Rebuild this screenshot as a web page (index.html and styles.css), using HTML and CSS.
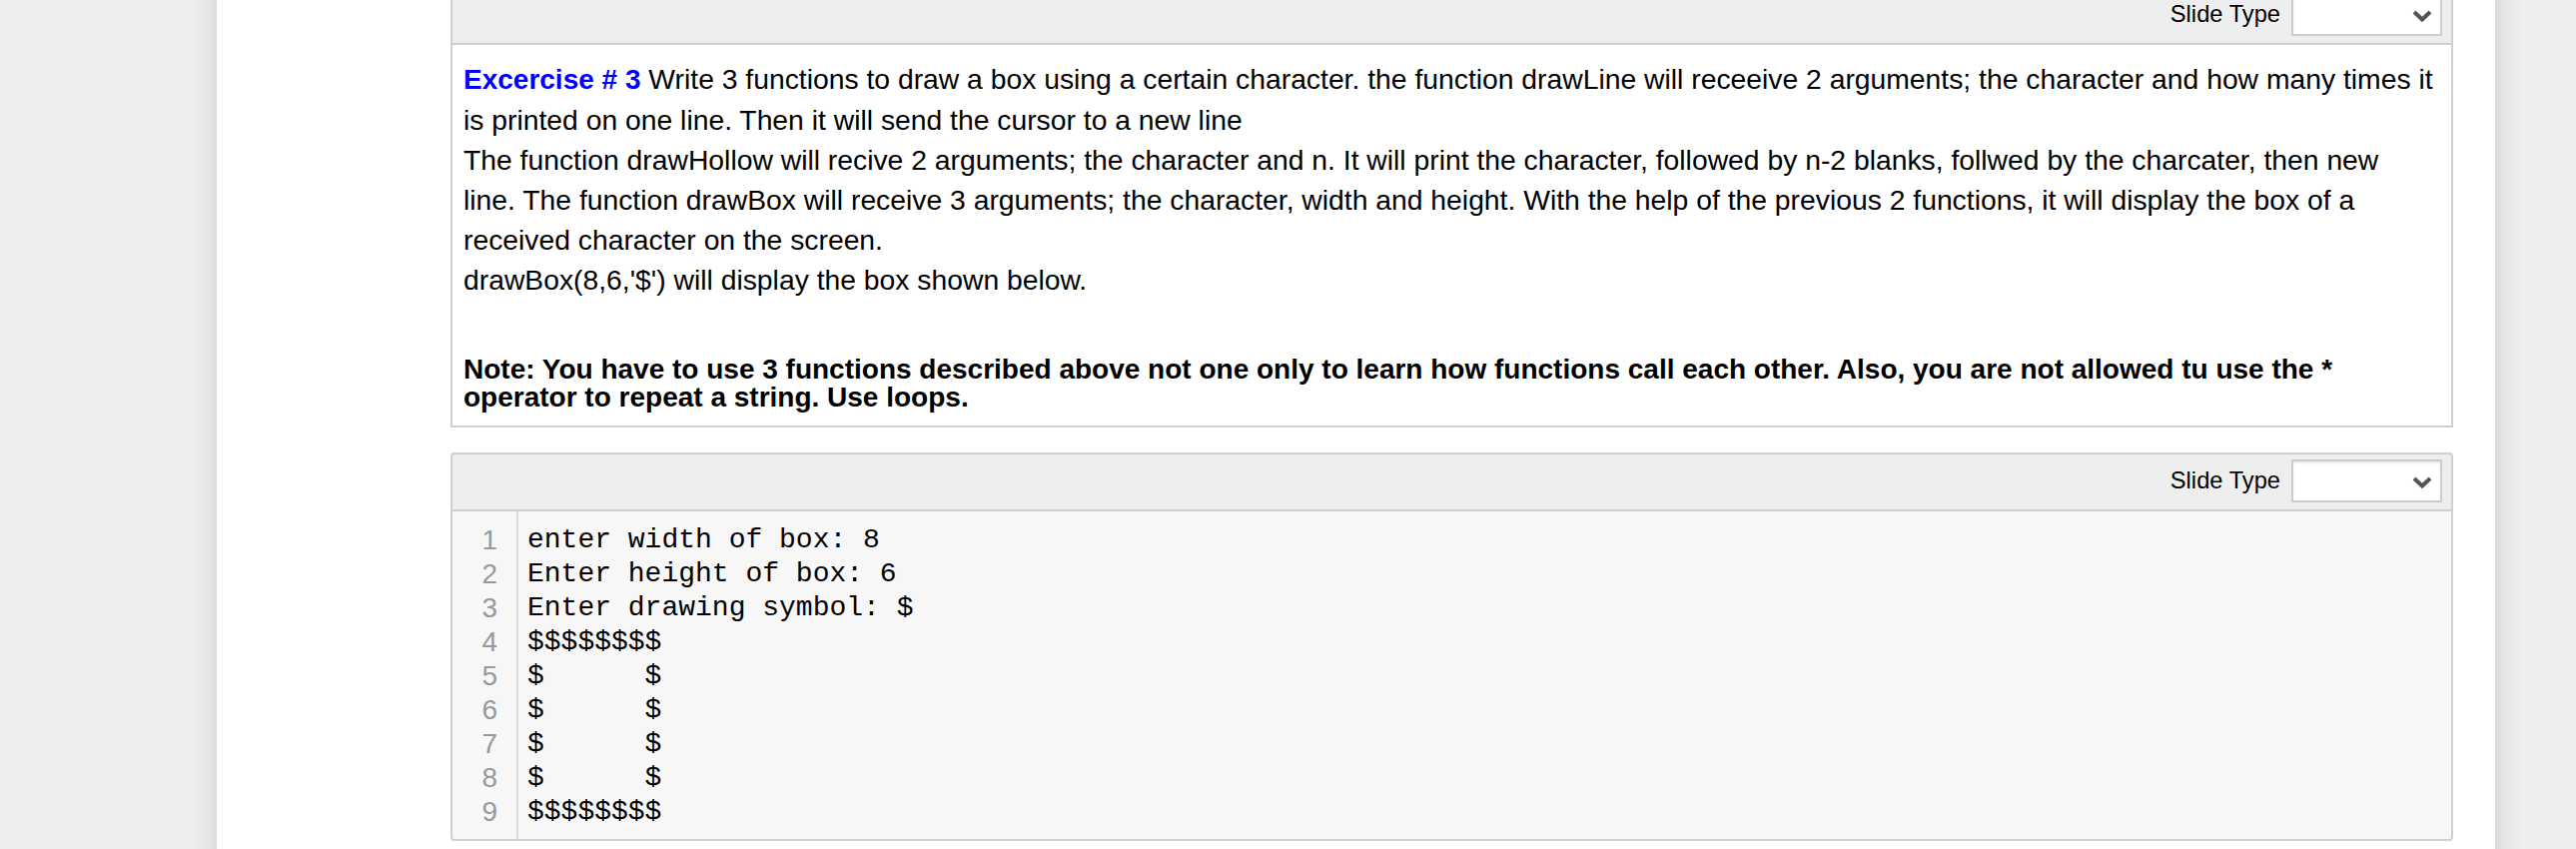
FILE: index.html
```html
<!DOCTYPE html>
<html>
<head>
<meta charset="utf-8">
<title>Notebook</title>
<link rel="stylesheet" href="styles.css">
</head>
<body>
<div class="notebook">
  <div class="cell">
    <div class="prompt"></div>
    <div class="inner">
      <div class="toolbar">
        <span class="tb-label">Slide Type</span>
        <div class="select">
          <svg class="chev" width="20" height="12" viewBox="0 0 20 12"><path d="M2 2 L10 9.5 L18 2" fill="none" stroke="#555" stroke-width="4"/></svg>
        </div>
      </div>
      <div class="text-render">
        <p><span class="ex">Excercise # 3</span> Write 3 functions to draw a box using a certain character. the function drawLine will receeive 2 arguments; the character and how many times it is printed on one line. Then it will send the cursor to a new line<br>The function drawHollow will recive 2 arguments; the character and n. It will print the character, followed by n-2 blanks, follwed by the charcater, then new line. The function drawBox will receive 3 arguments; the character, width and height. With the help of the previous 2 functions, it will display the box of a received character on the screen.<br>drawBox(8,6,'$') will display the box shown below.</p>
        <h4>Note: You have to use 3 functions described above not one only to learn how functions call each other. Also, you are not allowed tu use the * operator to repeat a string. Use loops.</h4>
      </div>
    </div>
  </div>
  <div class="cell cell-code">
    <div class="prompt"></div>
    <div class="inner">
      <div class="toolbar">
        <span class="tb-label">Slide Type</span>
        <div class="select">
          <svg class="chev" width="20" height="12" viewBox="0 0 20 12"><path d="M2 2 L10 9.5 L18 2" fill="none" stroke="#555" stroke-width="4"/></svg>
        </div>
      </div>
      <div class="code-area">
        <div class="gutter">
          <div class="ln">1</div><div class="ln">2</div><div class="ln">3</div><div class="ln">4</div><div class="ln">5</div><div class="ln">6</div><div class="ln">7</div><div class="ln">8</div><div class="ln">9</div>
        </div>
        <div class="lines">
          <div class="cl">enter width of box: 8</div>
          <div class="cl">Enter height of box: 6</div>
          <div class="cl">Enter drawing symbol: $</div>
          <div class="cl">$$$$$$$$</div>
          <div class="cl">$      $</div>
          <div class="cl">$      $</div>
          <div class="cl">$      $</div>
          <div class="cl">$      $</div>
          <div class="cl">$$$$$$$$</div>
        </div>
      </div>
    </div>
  </div>
</div>
</body>
</html>
```

FILE: styles.css
```css
html, body {
  margin: 0;
  padding: 0;
  background: #eeeeee;
  height: 850px;
  overflow: hidden;
}

body {
  font-family: "Liberation Sans", Arial, Helvetica, sans-serif;
  color: #000;
}

.notebook {
  width: 2221px;
  margin-left: 217px;
  margin-top: -26px;
  padding: 0 30px 200px 30px;
  background: #ffffff;
  box-shadow: 0 0 24px 2px rgba(87, 87, 87, 0.2);
}

.cell {
  display: flex;
  padding: 10px;
  border: 2px solid transparent;
}

.cell-code {
  margin-top: 1px;
}

.prompt {
  width: 192px;
  flex: none;
}

.inner {
  flex: 1;
  min-width: 0;
}

.toolbar {
  background: #eeeeee;
  border: 2px solid #cfcfcf;
  border-bottom: none;
  border-radius: 4px 4px 0 0;
  display: flex;
  justify-content: flex-end;
  align-items: flex-start;
  padding: 5px 9px 0 0;
  height: 50px;
}

.tb-label {
  font-size: 23.7px;
  line-height: 43px;
  margin-right: 11px;
}

.select {
  width: 147px;
  height: 39px;
  background: #ffffff;
  border: 2px solid #cccccc;
  box-shadow: inset 0 2px 2px rgba(0, 0, 0, 0.075);
  display: flex;
  justify-content: flex-end;
  align-items: center;
}

.chev {
  margin-right: 8px;
  margin-top: 2px;
}

.text-render {
  border: 2px solid #cfcfcf;
  padding: 14px 16px 14px 11px;
  font-size: 28.3px;
  line-height: 40px;
}

.text-render p {
  margin: 0 0 56px 0;
}

.ex {
  color: #0000ff;
  font-weight: bold;
  font-size: 28px;
}

.text-render h4 {
  margin: 0;
  font-size: 28px;
  line-height: 28px;
  font-weight: bold;
}

.code-area {
  display: flex;
  background: #f7f7f7;
  border: 2px solid #cfcfcf;
  border-radius: 0 0 4px 4px;
}

.gutter {
  width: 45px;
  padding: 12px 19px 10px 0;
  border-right: 2px solid #dddddd;
  text-align: right;
}

.ln {
  font-family: "Liberation Sans", Arial, sans-serif;
  font-size: 28px;
  line-height: 34px;
  height: 34px;
  color: #999999;
}

.lines {
  padding: 12px 9px 10px 9px;
}

.cl {
  font-family: "Liberation Mono", "Courier New", monospace;
  font-size: 28px;
  line-height: 34px;
  height: 34px;
  white-space: pre;
  color: #000;
}
```
